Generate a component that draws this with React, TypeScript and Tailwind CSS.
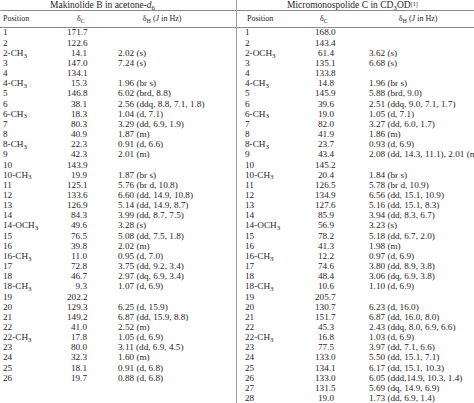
// NMR data table: two compounds side by side

type Row = { pos: string; c: string; h: string };

const leftRows: Row[] = [
  { pos: "1", c: "171.7", h: "" },
  { pos: "2", c: "122.6", h: "" },
  { pos: "2-CH3", c: "14.1", h: "2.02 (s)" },
  { pos: "3", c: "147.0", h: "7.24 (s)" },
  { pos: "4", c: "134.1", h: "" },
  { pos: "4-CH3", c: "15.3", h: "1.96 (br s)" },
  { pos: "5", c: "146.8", h: "6.02 (brd, 8.8)" },
  { pos: "6", c: "38.1", h: "2.56 (ddq, 8.8, 7.1, 1.8)" },
  { pos: "6-CH3", c: "18.3", h: "1.04 (d, 7.1)" },
  { pos: "7", c: "80.3", h: "3.29 (dd, 6.9, 1.9)" },
  { pos: "8", c: "40.9", h: "1.87 (m)" },
  { pos: "8-CH3", c: "22.3", h: "0.91 (d, 6.6)" },
  { pos: "9", c: "42.3", h: "2.01 (m)" },
  { pos: "10", c: "143.9", h: "" },
  { pos: "10-CH3", c: "19.9", h: "1.87 (br s)" },
  { pos: "11", c: "125.1", h: "5.76 (br d, 10.8)" },
  { pos: "12", c: "133.6", h: "6.60 (dd, 14.9, 10.8)" },
  { pos: "13", c: "126.9", h: "5.14 (dd, 14.9, 8.7)" },
  { pos: "14", c: "84.3", h: "3.99 (dd, 8.7, 7.5)" },
  { pos: "14-OCH3", c: "49.6", h: "3.28 (s)" },
  { pos: "15", c: "76.5", h: "5.08 (dd, 7.5, 1.8)" },
  { pos: "16", c: "39.8", h: "2.02 (m)" },
  { pos: "16-CH3", c: "11.0", h: "0.95 (d, 7.0)" },
  { pos: "17", c: "72.8", h: "3.75 (dd, 9.2, 3.4)" },
  { pos: "18", c: "46.7", h: "2.97 (dq, 6.9, 3.4)" },
  { pos: "18-CH3", c: "9.3", h: "1.07 (d, 6.9)" },
  { pos: "19", c: "202.2", h: "" },
  { pos: "20", c: "129.3", h: "6.25 (d, 15.9)" },
  { pos: "21", c: "149.2", h: "6.87 (dd, 15.9, 8.8)" },
  { pos: "22", c: "41.0", h: "2.52 (m)" },
  { pos: "22-CH3", c: "17.8", h: "1.05 (d, 6.9)" },
  { pos: "23", c: "80.0", h: "3.11 (dd, 6.9, 4.5)" },
  { pos: "24", c: "32.3", h: "1.60 (m)" },
  { pos: "25", c: "18.1", h: "0.91 (d, 6.8)" },
  { pos: "26", c: "19.7", h: "0.88 (d, 6.8)" },
];

const rightRows: Row[] = [
  { pos: "1", c: "168.0", h: "" },
  { pos: "2", c: "143.4", h: "" },
  { pos: "2-OCH3", c: "61.4", h: "3.62 (s)" },
  { pos: "3", c: "135.1", h: "6.68 (s)" },
  { pos: "4", c: "133.8", h: "" },
  { pos: "4-CH3", c: "14.8", h: "1.96 (br s)" },
  { pos: "5", c: "145.9", h: "5.88 (brd, 9.0)" },
  { pos: "6", c: "39.6", h: "2.51 (ddq, 9.0, 7.1, 1.7)" },
  { pos: "6-CH3", c: "19.0", h: "1.05 (d, 7.1)" },
  { pos: "7", c: "82.0", h: "3.27 (dd, 6.0, 1.7)" },
  { pos: "8", c: "41.9", h: "1.86 (m)" },
  { pos: "8-CH3", c: "23.7", h: "0.93 (d, 6.9)" },
  { pos: "9", c: "43.4", h: "2.08 (dd, 14.3, 11.1), 2.01 (m)" },
  { pos: "10", c: "145.2", h: "" },
  { pos: "10-CH3", c: "20.4", h: "1.84 (br s)" },
  { pos: "11", c: "126.5", h: "5.78 (br d, 10.9)" },
  { pos: "12", c: "134.9", h: "6.56 (dd, 15.1, 10.9)" },
  { pos: "13", c: "127.6", h: "5.16 (dd, 15.1, 8.3)" },
  { pos: "14", c: "85.9", h: "3.94 (dd, 8.3, 6.7)" },
  { pos: "14-OCH3", c: "56.9", h: "3.23 (s)" },
  { pos: "15", c: "78.2", h: "5.18 (dd, 6.7, 2.0)" },
  { pos: "16", c: "41.3", h: "1.98 (m)" },
  { pos: "16-CH3", c: "12.2", h: "0.97 (d, 6.9)" },
  { pos: "17", c: "74.6", h: "3.80 (dd, 8.9, 3.8)" },
  { pos: "18", c: "48.4", h: "3.06 (dq, 6.9, 3.8)" },
  { pos: "18-CH3", c: "10.6", h: "1.10 (d, 6.9)" },
  { pos: "19", c: "205.7", h: "" },
  { pos: "20", c: "130.7", h: "6.23 (d, 16.0)" },
  { pos: "21", c: "151.7", h: "6.87 (dd, 16.0, 8.0)" },
  { pos: "22", c: "45.3", h: "2.43 (ddq, 8.0, 6.9, 6.6)" },
  { pos: "22-CH3", c: "16.8", h: "1.03 (d, 6.9)" },
  { pos: "23", c: "77.5", h: "3.97 (dd, 7.1, 6.6)" },
  { pos: "24", c: "133.0", h: "5.50 (dd, 15.1, 7.1)" },
  { pos: "25", c: "134.1", h: "6.17 (dd, 15.1, 10.3)" },
  { pos: "26", c: "133.0", h: "6.05 (ddd,14.9, 10.3, 1.4)" },
  { pos: "27", c: "131.5", h: "5.69 (dq, 14.9, 6.9)" },
  { pos: "28", c: "19.0", h: "1.73 (dd, 6.9, 1.4)" },
];

// "14-OCH3" -> 14-OCH with subscript 3
function Pos({ text }: { text: string }) {
  if (text.endsWith("CH3")) {
    return (
      <>
        {text.slice(0, -1)}
        <sub>3</sub>
      </>
    );
  }
  return <>{text}</>;
}

function Delta({ sub }: { sub: string }) {
  return (
    <span>
      δ<sub className="text-[6px]">{sub}</sub>
    </span>
  );
}

export default function App() {
  return (
    <div
      className="flex w-[474px] h-[403px] overflow-hidden bg-white text-[#262626]"
      style={{ fontFamily: '"Liberation Serif", "Times New Roman", serif' }}
    >
      {/* Makinolide B */}
      <div className="w-[237px] shrink-0 border-r border-[#9a9a9a]">
        <div className="h-[11px] border-b border-[#8a8a8a] pl-[50px] text-[9.5px] leading-[10px] whitespace-nowrap">
          Makinolide B in acetone-<i>d</i>
          <sub>6</sub>
        </div>
        <div className="flex h-[17px] items-center border-b border-[#8a8a8a] pl-[3px] text-[8px] whitespace-nowrap">
          <span className="w-[74px]">Position</span>
          <Delta sub="C" />
          <span className="ml-[58px]">
            <Delta sub="H" /> (<i>J</i> in Hz)
          </span>
        </div>
        <div>
          {leftRows.map((r) => (
            <div
              key={r.pos}
              className="flex h-[10.17px] items-center pl-[3px] text-[9.2px] leading-none whitespace-nowrap"
            >
              <span className="w-[64px]">
                <Pos text={r.pos} />
              </span>
              <span className="w-[20px] text-right">{r.c}</span>
              <span className="ml-[31px]">{r.h}</span>
            </div>
          ))}
        </div>
      </div>

      {/* Micromonospolide C */}
      <div className="w-[237px] shrink-0 overflow-hidden">
        <div className="h-[11px] border-b border-[#8a8a8a] pl-[50px] text-[9.5px] leading-[11px] whitespace-nowrap">
          Micromonospolide C in CD<sub>3</sub>OD
          <sup className="-top-[2px] text-[6px]">[1]</sup>
        </div>
        <div className="flex h-[17px] items-center border-b border-[#8a8a8a] pl-[10px] text-[8px] whitespace-nowrap">
          <span className="w-[73px]">Position</span>
          <Delta sub="C" />
          <span className="ml-[71px]">
            <Delta sub="H" /> (<i>J</i> in Hz)
          </span>
        </div>
        <div>
          {rightRows.map((r) => (
            <div
              key={r.pos}
              className="flex h-[10.17px] items-center pl-[8px] text-[9.2px] leading-none whitespace-nowrap"
            >
              <span className="w-[70px] shrink-0">
                <Pos text={r.pos} />
              </span>
              <span className="w-[19px] shrink-0 text-right">{r.c}</span>
              <span className="ml-[35px] shrink-0">{r.h}</span>
            </div>
          ))}
        </div>
      </div>
    </div>
  );
}
